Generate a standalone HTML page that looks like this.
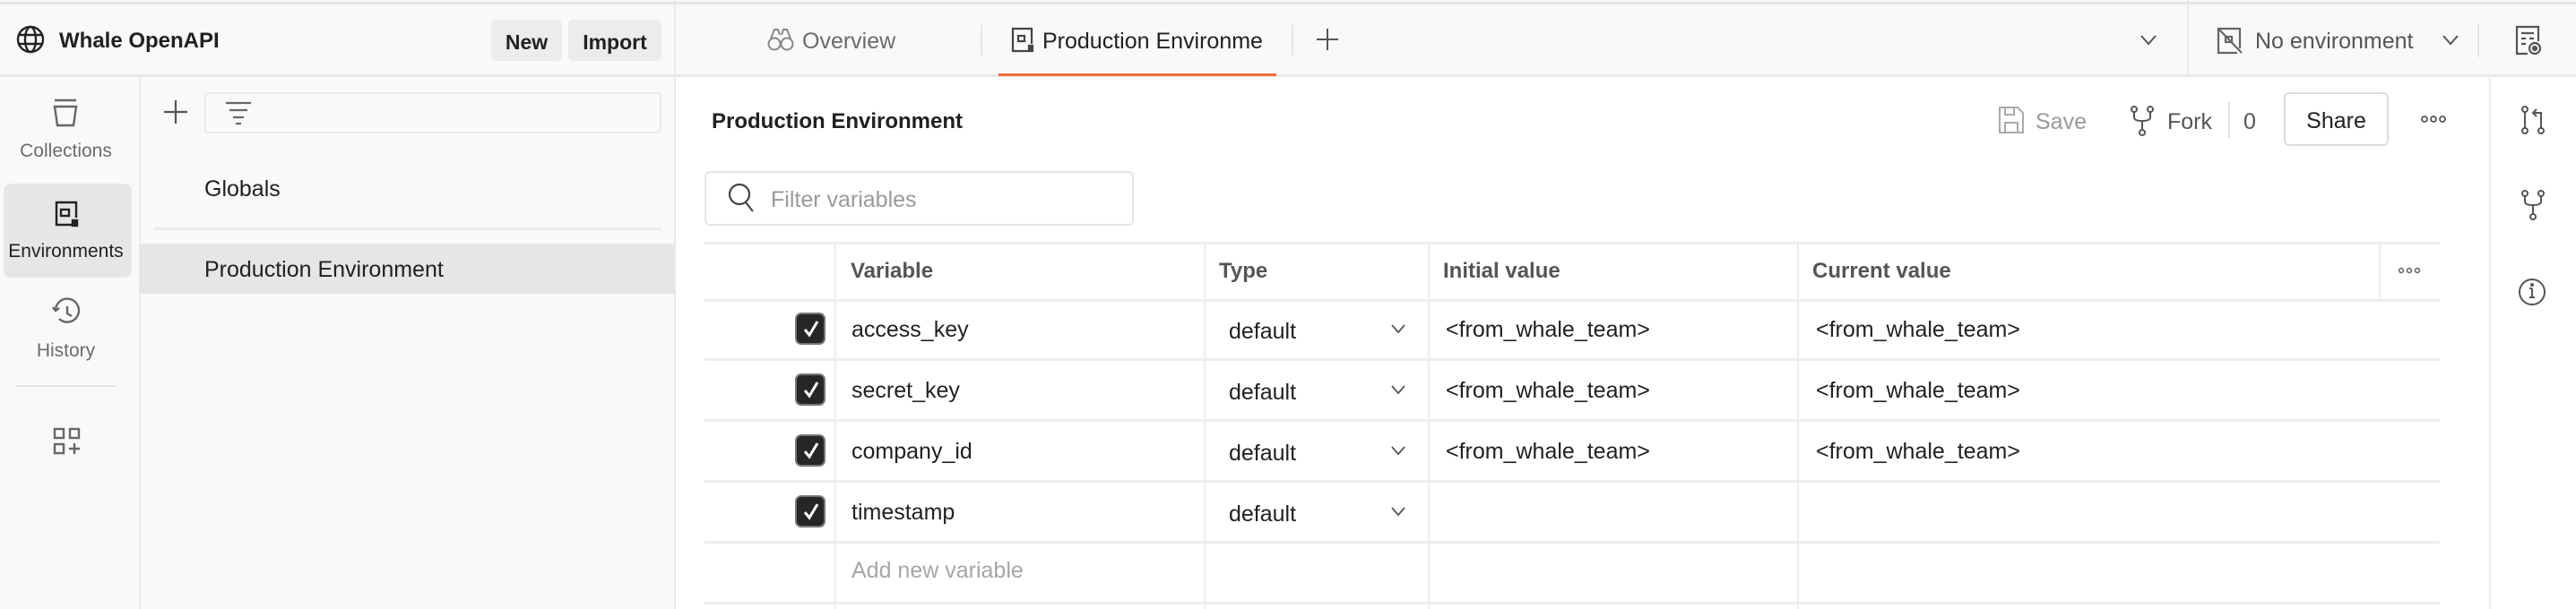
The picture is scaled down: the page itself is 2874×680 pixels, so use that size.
<!DOCTYPE html>
<html><head><meta charset="utf-8"><style>
*{box-sizing:border-box;margin:0;padding:0}
body{width:2874px;height:680px;overflow:hidden;background:#fff;font-family:"Liberation Sans",sans-serif;color:#212121;position:relative}
.a{position:absolute}
.t{position:absolute;white-space:nowrap;font-size:25px;line-height:28px;padding-top:2px}
.hl{position:absolute;height:3px;background:#ededed}
.vl{position:absolute;width:2px;background:#ededed}
svg{position:absolute;overflow:visible}
.cb{position:absolute;width:34px;height:36px;background:#262626;border:2px solid #777;border-radius:7px}
</style></head><body>
<div class="a" style="left:0;top:0;width:2874px;height:84px;background:#f9f9f9"></div>
<div class="a" style="left:0;top:0;width:752px;height:680px;background:#f9f9f9"></div>
<div class="a" style="left:0;top:2px;width:2874px;height:3px;background:#e6e6e6"></div>
<div class="hl" style="left:0;top:83px;width:2874px;background:#e9e9e9"></div>
<div class="vl" style="left:752px;top:0;height:680px;background:#e9e9e9"></div>
<div class="vl" style="left:155px;top:84px;height:596px;background:#ececec"></div>
<div class="vl" style="left:2440px;top:0;height:84px;background:#e9e9e9"></div>
<div class="vl" style="left:2777px;top:84px;height:596px;background:#ededed"></div>

<svg style="left:18px;top:28px" width="32" height="32" viewBox="0 0 32 32" fill="none" stroke="#222" stroke-width="2.4"><circle cx="16" cy="16" r="14"/><ellipse cx="16" cy="16" rx="6" ry="14"/><path d="M3 11h26M3 21h26"/></svg>
<div class="t" style="left:66px;top:30px;font-weight:bold;font-size:24px">Whale OpenAPI</div>
<div class="a" style="left:548px;top:22px;width:79px;height:46px;background:#ececec;border-radius:6px"></div>
<div class="t" style="left:548px;top:31px;width:79px;text-align:center;font-weight:bold;font-size:23px">New</div>
<div class="a" style="left:634px;top:22px;width:104px;height:46px;background:#ececec;border-radius:6px"></div>
<div class="t" style="left:634px;top:31px;width:104px;text-align:center;font-weight:bold;font-size:23px">Import</div>

<svg style="left:58px;top:110px" width="30" height="32" viewBox="0 0 30 32" fill="none" stroke="#666" stroke-width="2.4"><path d="M3 2h24M3 9h24l-3 21H6z"/></svg>
<div class="t" style="left:0;top:153px;width:147px;text-align:center;font-size:21px;color:#6b6b6b">Collections</div>
<div class="a" style="left:4px;top:205px;width:143px;height:105px;background:#e6e6e6;border-radius:8px"></div>
<svg style="left:60px;top:224px" width="30" height="30" viewBox="0 0 30 30" fill="none" stroke="#222" stroke-width="2.4"><path d="M22 27H3V2h22v17"/><rect x="8" y="10" width="9" height="7"/><rect x="21" y="22" width="5" height="6" fill="#222"/></svg>
<div class="t" style="left:0;top:265px;width:147px;text-align:center;font-size:21px;color:#222">Environments</div>
<svg style="left:58px;top:334px" width="32" height="30" viewBox="0 0 32 30" fill="none" stroke="#666" stroke-width="2.4"><path d="M4 12a13 13 0 1 1 4 10"/><path d="M1 9l3 4 4-3"/><path d="M17 8v8l5 3"/></svg>
<div class="t" style="left:0;top:376px;width:147px;text-align:center;font-size:21px;color:#6b6b6b">History</div>
<div class="a" style="left:18px;top:430px;width:112px;height:2px;background:#e6e6e6"></div>
<svg style="left:60px;top:478px" width="30" height="30" viewBox="0 0 30 30" fill="none" stroke="#666" stroke-width="2.4"><rect x="1" y="1" width="10" height="10"/><rect x="18" y="1" width="10" height="10"/><rect x="1" y="18" width="10" height="10"/><path d="M23 17v12M17 23h12"/></svg>

<svg style="left:183px;top:112px" width="26" height="26" viewBox="0 0 26 26" stroke="#555" stroke-width="2.2"><path d="M13 0v26M0 13h26"/></svg>
<div class="a" style="left:228px;top:103px;width:510px;height:46px;border:2px solid #e9e9e9;border-radius:4px;background:#f9f9f9"></div>
<svg style="left:252px;top:113px" width="28" height="26" viewBox="0 0 28 26" stroke="#666" stroke-width="2.2"><path d="M0 2h28M4 10h20M8 18h12M11 25h6"/></svg>
<div class="t" style="left:228px;top:195px">Globals</div>
<div class="a" style="left:172px;top:254px;width:566px;height:3px;background:#ebebeb"></div>
<div class="a" style="left:156px;top:272px;width:596px;height:56px;background:#e6e6e6"></div>
<div class="t" style="left:228px;top:285px">Production Environment</div>

<svg style="left:856px;top:31px" width="30" height="26" viewBox="0 0 30 26" fill="none" stroke="#888" stroke-width="2"><circle cx="8" cy="18" r="6.5"/><circle cx="22" cy="18" r="6.5"/><path d="M4 12l4-10h4l2 6M26 12l-4-10h-4l-2 6"/></svg>
<div class="t" style="left:895px;top:30px;color:#6b6b6b">Overview</div>
<div class="vl" style="left:1094px;top:28px;height:34px;background:#e6e6e6"></div>
<svg style="left:1128px;top:30px" width="26" height="28" viewBox="0 0 26 28" fill="none" stroke="#444" stroke-width="2.2"><path d="M19 27H2V2h21v17"/><rect x="8" y="10" width="7" height="6"/><rect x="20" y="21" width="4" height="6" fill="#444"/></svg>
<div class="a" style="left:1163px;top:28px;width:246px;height:34px;overflow:hidden"><div class="t" style="left:0;top:2px">Production Environment</div></div>
<div class="a" style="left:1114px;top:82px;width:310px;height:3px;background:#ec6f3c"></div>
<div class="vl" style="left:1441px;top:28px;height:34px;background:#e6e6e6"></div>
<svg style="left:1469px;top:32px" width="24" height="24" viewBox="0 0 24 24" stroke="#555" stroke-width="2"><path d="M12 0v24M0 12h24"/></svg>
<svg style="left:2388px;top:39px" width="18" height="12" viewBox="0 0 18 12" fill="none" stroke="#555" stroke-width="2"><path d="M1 1l8 9 8-9"/></svg>
<svg style="left:2472px;top:30px" width="30" height="30" viewBox="0 0 30 30" fill="none" stroke="#666" stroke-width="2.2"><path d="M24 29H3V2h24v22"/><path d="M3 2l26 27"/><rect x="11" y="11" width="7" height="6"/></svg>
<div class="t" style="left:2516px;top:30px;color:#555">No environment</div>
<svg style="left:2725px;top:39px" width="18" height="12" viewBox="0 0 18 12" fill="none" stroke="#555" stroke-width="2"><path d="M1 1l8 9 8-9"/></svg>
<div class="vl" style="left:2764px;top:26px;height:38px;background:#e6e6e6"></div>
<svg style="left:2806px;top:28px" width="30" height="34" viewBox="0 0 30 34" fill="none" stroke="#555" stroke-width="2.2"><path d="M14 32H2V2h24v16"/><path d="M7 9h14M7 15h5M16 15h5M7 21h5"/><circle cx="22" cy="26" r="6"/><circle cx="22" cy="26" r="2" fill="#555"/></svg>

<svg style="left:2812px;top:118px" width="28" height="32" viewBox="0 0 28 32" fill="none" stroke="#555" stroke-width="2"><circle cx="5" cy="4" r="3"/><circle cx="5" cy="28" r="3"/><circle cx="23" cy="28" r="3"/><path d="M5 7v18M23 25V8h-8M18 4l-4 4 4 4"/></svg>
<svg style="left:2812px;top:212px" width="28" height="34" viewBox="0 0 28 34" fill="none" stroke="#555" stroke-width="2"><circle cx="5" cy="4" r="3"/><circle cx="23" cy="4" r="3"/><circle cx="14" cy="30" r="3"/><path d="M5 7v6q0 4 9 4q9 0 9-4V7M14 17v10"/></svg>
<svg style="left:2810px;top:310px" width="30" height="32" viewBox="0 0 30 32" fill="none" stroke="#555" stroke-width="2"><circle cx="15" cy="16" r="14"/><path d="M15 12v10M12 12h3M12 22h6"/><circle cx="15" cy="8" r="1" fill="#555"/></svg>

<div class="t" style="left:794px;top:120px;font-weight:bold;font-size:24px">Production Environment</div>
<svg style="left:2229px;top:118px" width="30" height="32" viewBox="0 0 30 32" fill="none" stroke="#aaa" stroke-width="2"><path d="M2 2h20l6 6v22H2z"/><path d="M8 2v8h10V2M8 30V19h14v11"/></svg>
<div class="t" style="left:2271px;top:120px;color:#999">Save</div>
<svg style="left:2376px;top:118px" width="28" height="34" viewBox="0 0 28 34" fill="none" stroke="#555" stroke-width="2"><circle cx="5" cy="4" r="3"/><circle cx="23" cy="4" r="3"/><circle cx="14" cy="30" r="3"/><path d="M5 7v6q0 4 9 4q9 0 9-4V7M14 17v10"/></svg>
<div class="t" style="left:2418px;top:120px;color:#555">Fork</div>
<div class="vl" style="left:2486px;top:114px;height:40px;background:#e0e0e0"></div>
<div class="t" style="left:2503px;top:120px;color:#555">0</div>
<div class="a" style="left:2548px;top:103px;width:117px;height:60px;border:2px solid #dcdcdc;border-radius:6px"></div>
<div class="t" style="left:2548px;top:119px;width:117px;text-align:center">Share</div>
<svg style="left:2701px;top:128px" width="28" height="10" viewBox="0 0 28 10" fill="none" stroke="#555" stroke-width="1.8"><circle cx="4" cy="5" r="3"/><circle cx="14" cy="5" r="3"/><circle cx="24" cy="5" r="3"/></svg>

<div class="a" style="left:786px;top:191px;width:479px;height:61px;border:2px solid #e6e6e6;border-radius:6px"></div>
<svg style="left:812px;top:204px" width="30" height="34" viewBox="0 0 30 34" fill="none" stroke="#444" stroke-width="2.2"><circle cx="13" cy="13" r="11"/><path d="M20 22l8 10"/></svg>
<div class="t" style="left:860px;top:207px;color:#9a9a9a">Filter variables</div>

<div class="hl" style="left:786px;top:270px;width:1936px"></div>
<div class="hl" style="left:786px;top:334px;width:1936px"></div>
<div class="hl" style="left:786px;top:400px;width:1936px"></div>
<div class="hl" style="left:786px;top:468px;width:1936px"></div>
<div class="hl" style="left:786px;top:536px;width:1936px"></div>
<div class="hl" style="left:786px;top:604px;width:1936px"></div>
<div class="hl" style="left:786px;top:672px;width:1936px"></div>
<div class="vl" style="left:931px;top:272px;height:408px"></div>
<div class="vl" style="left:1343px;top:272px;height:408px"></div>
<div class="vl" style="left:1593px;top:272px;height:408px"></div>
<div class="vl" style="left:2005px;top:272px;height:408px"></div>
<div class="vl" style="left:2654px;top:272px;height:63px"></div>
<div class="t" style="left:949px;top:287px;color:#555;font-weight:bold;font-size:24px">Variable</div>
<div class="t" style="left:1360px;top:287px;color:#555;font-weight:bold;font-size:24px">Type</div>
<div class="t" style="left:1610px;top:287px;color:#555;font-weight:bold;font-size:24px">Initial value</div>
<div class="t" style="left:2022px;top:287px;color:#555;font-weight:bold;font-size:24px">Current value</div>
<svg style="left:2676px;top:298px" width="24" height="8" viewBox="0 0 24 8" fill="none" stroke="#666" stroke-width="1.6"><circle cx="3" cy="4" r="2.4"/><circle cx="12" cy="4" r="2.4"/><circle cx="21" cy="4" r="2.4"/></svg>

<div class="cb" style="left:887px;top:349px"></div><svg style="left:896px;top:357px" width="18" height="20" viewBox="0 0 18 20" fill="none" stroke="#fff" stroke-width="3"><path d="M2 11l5 6 9-15"/></svg>
<div class="t" style="left:950px;top:352px">access_key</div>
<div class="t" style="left:1371px;top:354px">default</div>
<svg style="left:1552px;top:362px" width="16" height="10" viewBox="0 0 16 10" fill="none" stroke="#555" stroke-width="1.8"><path d="M1 1l7 8 7-8"/></svg>
<div class="t" style="left:1613px;top:352px">&lt;from_whale_team&gt;</div>
<div class="t" style="left:2026px;top:352px">&lt;from_whale_team&gt;</div>

<div class="cb" style="left:887px;top:417px"></div><svg style="left:896px;top:425px" width="18" height="20" viewBox="0 0 18 20" fill="none" stroke="#fff" stroke-width="3"><path d="M2 11l5 6 9-15"/></svg>
<div class="t" style="left:950px;top:420px">secret_key</div>
<div class="t" style="left:1371px;top:422px">default</div>
<svg style="left:1552px;top:430px" width="16" height="10" viewBox="0 0 16 10" fill="none" stroke="#555" stroke-width="1.8"><path d="M1 1l7 8 7-8"/></svg>
<div class="t" style="left:1613px;top:420px">&lt;from_whale_team&gt;</div>
<div class="t" style="left:2026px;top:420px">&lt;from_whale_team&gt;</div>

<div class="cb" style="left:887px;top:485px"></div><svg style="left:896px;top:493px" width="18" height="20" viewBox="0 0 18 20" fill="none" stroke="#fff" stroke-width="3"><path d="M2 11l5 6 9-15"/></svg>
<div class="t" style="left:950px;top:488px">company_id</div>
<div class="t" style="left:1371px;top:490px">default</div>
<svg style="left:1552px;top:498px" width="16" height="10" viewBox="0 0 16 10" fill="none" stroke="#555" stroke-width="1.8"><path d="M1 1l7 8 7-8"/></svg>
<div class="t" style="left:1613px;top:488px">&lt;from_whale_team&gt;</div>
<div class="t" style="left:2026px;top:488px">&lt;from_whale_team&gt;</div>

<div class="cb" style="left:887px;top:553px"></div><svg style="left:896px;top:561px" width="18" height="20" viewBox="0 0 18 20" fill="none" stroke="#fff" stroke-width="3"><path d="M2 11l5 6 9-15"/></svg>
<div class="t" style="left:950px;top:556px">timestamp</div>
<div class="t" style="left:1371px;top:558px">default</div>
<svg style="left:1552px;top:566px" width="16" height="10" viewBox="0 0 16 10" fill="none" stroke="#555" stroke-width="1.8"><path d="M1 1l7 8 7-8"/></svg>

<div class="t" style="left:950px;top:621px;color:#a6a6a6">Add new variable</div>
</body></html>
